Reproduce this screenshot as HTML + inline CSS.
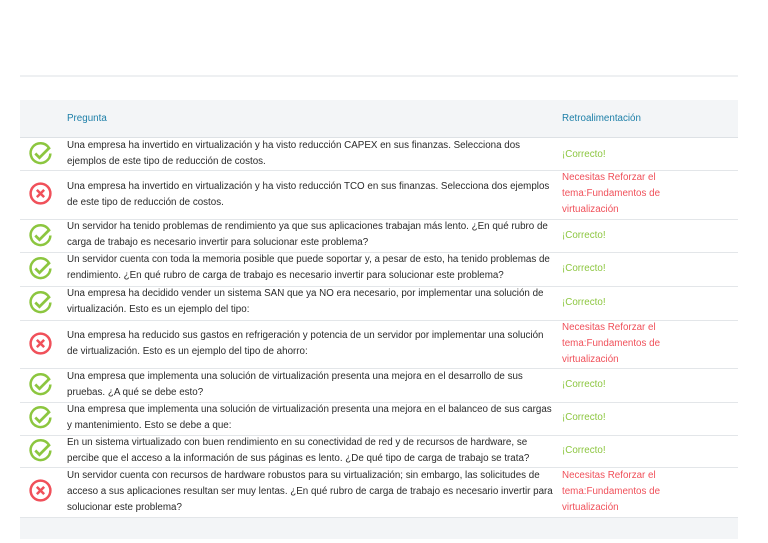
<!DOCTYPE html>
<html><head><meta charset="utf-8"><style>
body{margin:0;width:768px;height:543px;background:#fff;font-family:"Liberation Sans",sans-serif;position:relative;overflow:hidden}
.top{position:absolute;left:20px;top:75px;width:718px;height:2px;background:#eef0f2}
.hd{position:absolute;left:20px;top:100px;width:718px;height:37px;background:#f3f5f7;border-bottom:1px solid #dde1e5}
.hd span{position:absolute;top:13px;font-size:9.8px;color:#1d7fa8}
.r{position:absolute;left:20px;width:718px;border-bottom:1px solid #e3e6e9}
.q{position:absolute;left:47px;font-size:9.8px;color:#2a2a2a;line-height:16px;white-space:nowrap}
.f{position:absolute;left:542px;font-size:9.8px;line-height:16px;white-space:nowrap}
.ok{color:#8cc63f}.bad{color:#f0505a}
svg{position:absolute;left:8px}
.ft{position:absolute;left:20px;top:518px;width:718px;height:21px;background:#f3f5f7}
</style></head><body>
<div class="top"></div>
<div class="hd"><span style="left:47px">Pregunta</span><span style="left:542px">Retroalimentación</span></div>

<div class="r" style="top:137px;height:33px"><svg style="top:4px" width="25" height="25" viewBox="0 0 24 24"><path d="M20 6.5A9.5 9.5 0 1 0 21.5 12" fill="none" stroke="#8cc63f" stroke-width="2.4"/><path d="M7 12l4 4 10-10" fill="none" stroke="#8cc63f" stroke-width="2.6"/></svg><div class="q" style="top:1px">Una empresa ha invertido en virtualización y ha visto reducción CAPEX en sus finanzas. Selecciona dos<br>ejemplos de este tipo de reducción de costos.</div><div class="f ok" style="top:10px">¡Correcto!</div></div>

<div class="r" style="top:170px;height:49px"><svg style="top:11px" width="25" height="25" viewBox="0 0 24 24"><circle cx="12" cy="12" r="9.5" fill="none" stroke="#f0505a" stroke-width="2.4"/><path d="M8.5 8.5l7 7M15.5 8.5l-7 7" stroke="#f0505a" stroke-width="2.4"/></svg><div class="q" style="top:9px">Una empresa ha invertido en virtualización y ha visto reducción TCO en sus finanzas. Selecciona dos ejemplos<br>de este tipo de reducción de costos.</div><div class="f bad" style="top:0px">Necesitas Reforzar el<br>tema:Fundamentos de<br>virtualización</div></div>

<div class="r" style="top:219px;height:33px"><svg style="top:4px" width="25" height="25" viewBox="0 0 24 24"><path d="M20 6.5A9.5 9.5 0 1 0 21.5 12" fill="none" stroke="#8cc63f" stroke-width="2.4"/><path d="M7 12l4 4 10-10" fill="none" stroke="#8cc63f" stroke-width="2.6"/></svg><div class="q" style="top:0px">Un servidor ha tenido problemas de rendimiento ya que sus aplicaciones trabajan más lento. ¿En qué rubro de<br>carga de trabajo es necesario invertir para solucionar este problema?</div><div class="f ok" style="top:9px">¡Correcto!</div></div>

<div class="r" style="top:252px;height:34px"><svg style="top:4px" width="25" height="25" viewBox="0 0 24 24"><path d="M20 6.5A9.5 9.5 0 1 0 21.5 12" fill="none" stroke="#8cc63f" stroke-width="2.4"/><path d="M7 12l4 4 10-10" fill="none" stroke="#8cc63f" stroke-width="2.6"/></svg><div class="q" style="top:0px">Un servidor cuenta con toda la memoria posible que puede soportar y, a pesar de esto, ha tenido problemas de<br>rendimiento. ¿En qué rubro de carga de trabajo es necesario invertir para solucionar este problema?</div><div class="f ok" style="top:9px">¡Correcto!</div></div>

<div class="r" style="top:286px;height:34px"><svg style="top:4px" width="25" height="25" viewBox="0 0 24 24"><path d="M20 6.5A9.5 9.5 0 1 0 21.5 12" fill="none" stroke="#8cc63f" stroke-width="2.4"/><path d="M7 12l4 4 10-10" fill="none" stroke="#8cc63f" stroke-width="2.6"/></svg><div class="q" style="top:0px">Una empresa ha decidido vender un sistema SAN que ya NO era necesario, por implementar una solución de<br>virtualización. Esto es un ejemplo del tipo:</div><div class="f ok" style="top:9px">¡Correcto!</div></div>

<div class="r" style="top:320px;height:48px"><svg style="top:11px" width="25" height="25" viewBox="0 0 24 24"><circle cx="12" cy="12" r="9.5" fill="none" stroke="#f0505a" stroke-width="2.4"/><path d="M8.5 8.5l7 7M15.5 8.5l-7 7" stroke="#f0505a" stroke-width="2.4"/></svg><div class="q" style="top:8px">Una empresa ha reducido sus gastos en refrigeración y potencia de un servidor por implementar una solución<br>de virtualización. Esto es un ejemplo del tipo de ahorro:</div><div class="f bad" style="top:0px">Necesitas Reforzar el<br>tema:Fundamentos de<br>virtualización</div></div>

<div class="r" style="top:368px;height:34px"><svg style="top:4px" width="25" height="25" viewBox="0 0 24 24"><path d="M20 6.5A9.5 9.5 0 1 0 21.5 12" fill="none" stroke="#8cc63f" stroke-width="2.4"/><path d="M7 12l4 4 10-10" fill="none" stroke="#8cc63f" stroke-width="2.6"/></svg><div class="q" style="top:1px">Una empresa que implementa una solución de virtualización presenta una mejora en el desarrollo de sus<br>pruebas. ¿A qué se debe esto?</div><div class="f ok" style="top:9px">¡Correcto!</div></div>

<div class="r" style="top:402px;height:33px"><svg style="top:3px" width="25" height="25" viewBox="0 0 24 24"><path d="M20 6.5A9.5 9.5 0 1 0 21.5 12" fill="none" stroke="#8cc63f" stroke-width="2.4"/><path d="M7 12l4 4 10-10" fill="none" stroke="#8cc63f" stroke-width="2.6"/></svg><div class="q" style="top:0px">Una empresa que implementa una solución de virtualización presenta una mejora en el balanceo de sus cargas<br>y mantenimiento. Esto se debe a que:</div><div class="f ok" style="top:8px">¡Correcto!</div></div>

<div class="r" style="top:435px;height:32px"><svg style="top:3px" width="25" height="25" viewBox="0 0 24 24"><path d="M20 6.5A9.5 9.5 0 1 0 21.5 12" fill="none" stroke="#8cc63f" stroke-width="2.4"/><path d="M7 12l4 4 10-10" fill="none" stroke="#8cc63f" stroke-width="2.6"/></svg><div class="q" style="top:0px">En un sistema virtualizado con buen rendimiento en su conectividad de red y de recursos de hardware, se<br>percibe que el acceso a la información de sus páginas es lento. ¿De qué tipo de carga de trabajo se trata?</div><div class="f ok" style="top:8px">¡Correcto!</div></div>

<div class="r" style="top:467px;height:50px"><svg style="top:11px" width="25" height="25" viewBox="0 0 24 24"><circle cx="12" cy="12" r="9.5" fill="none" stroke="#f0505a" stroke-width="2.4"/><path d="M8.5 8.5l7 7M15.5 8.5l-7 7" stroke="#f0505a" stroke-width="2.4"/></svg><div class="q" style="top:1px">Un servidor cuenta con recursos de hardware robustos para su virtualización; sin embargo, las solicitudes de<br>acceso a sus aplicaciones resultan ser muy lentas. ¿En qué rubro de carga de trabajo es necesario invertir para<br>solucionar este problema?</div><div class="f bad" style="top:1px">Necesitas Reforzar el<br>tema:Fundamentos de<br>virtualización</div></div>

<div class="ft"></div>
</body></html>
